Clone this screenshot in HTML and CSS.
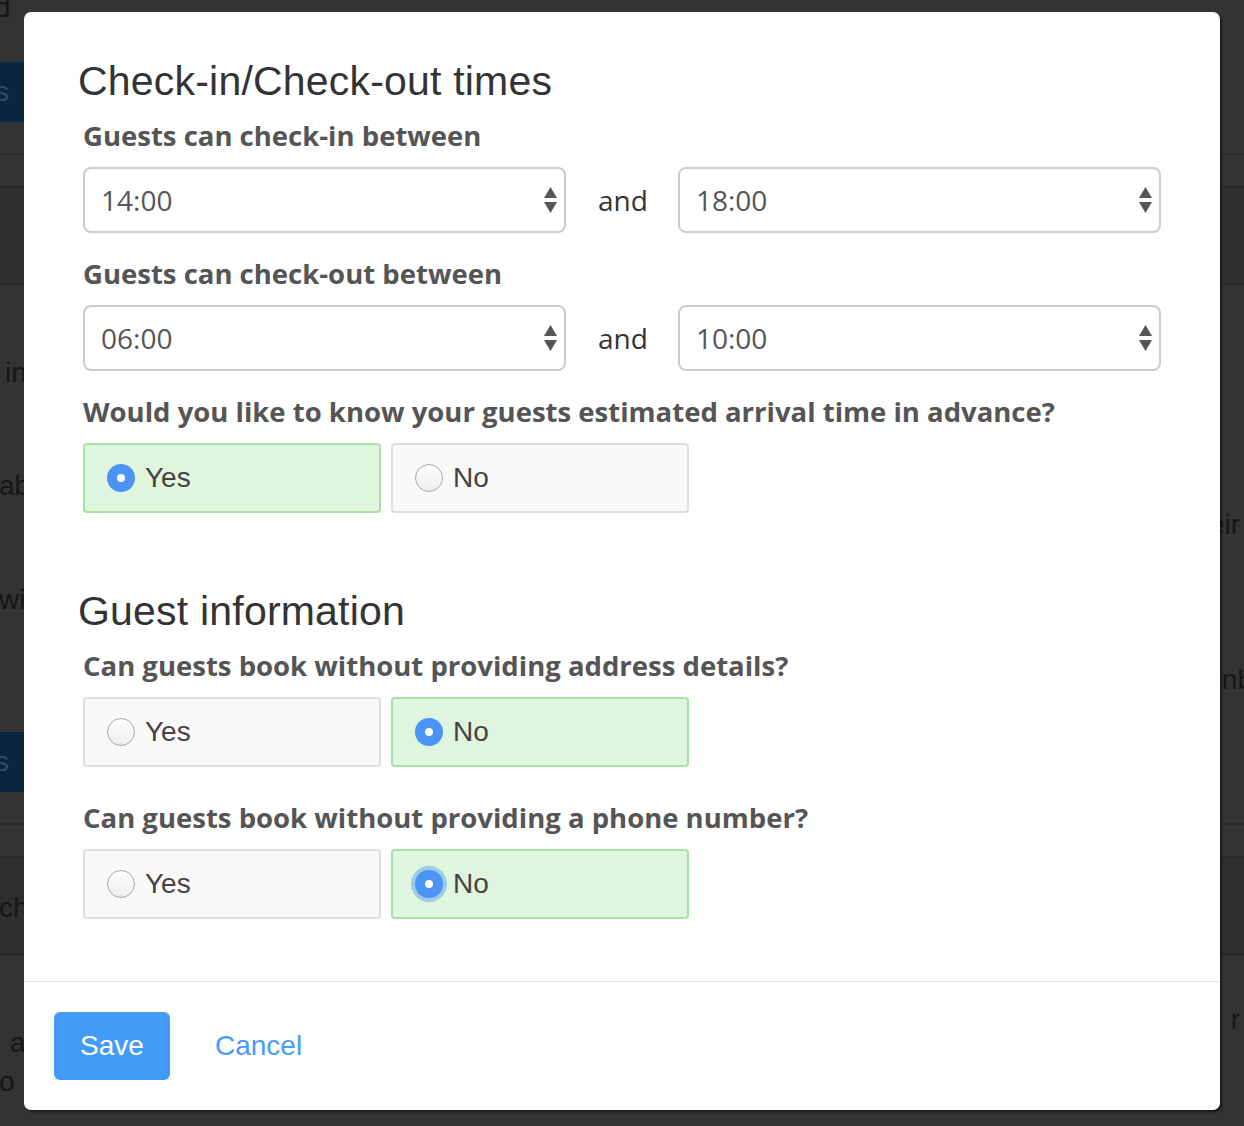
FILE: index.html
```html
<html>
<head>
  <link rel="stylesheet" href="styles.css">
</head>
<body>
  <!-- page behind the dialog -->
  <div class="backdrop">
    <div class="bg-head"><span class="bg-word cut">d</span></div>
    <div class="bg-tab"><span>s</span></div>
    <div class="bg-row"></div>
    <div class="bg-row"></div>
    <div class="bg-row tall"></div>
    <div class="bg-text top-block">
      <div class="bg-line l1"><span class="in">in the</span></div>
      <div class="bg-line l2"><span class="edge">able</span></div>
      <div class="bg-line l3 right"><span>their</span></div>
      <div class="bg-line l4"><span class="edge">will</span></div>
      <div class="bg-line l5 right"><span class="over">nb</span></div>
    </div>
    <div class="bg-tab"><span>s</span></div>
    <div class="bg-row"></div>
    <div class="bg-row"></div>
    <div class="bg-row tall"><div class="bg-line l6"><span class="edge">check</span></div></div>
    <div class="bg-text">
      <div class="bg-line l7 right"><span>r</span></div>
      <div class="bg-line l8"><span class="in2">a</span></div>
      <div class="bg-line l9"><span class="edge">o</span></div>
    </div>
  </div>

  <div class="modal">
    <div class="modal-body">
      <section class="section">
        <h2>Check-in/Check-out times</h2>
        <div class="group">
          <label>Guests can check-in between</label>
          <div class="range">
            <div class="select">
              <span>14:00</span>
              <svg class="arrows" width="13" height="26" viewBox="0 0 13 26"><path d="M0 11 L6.5 0 L13 11 Z M0 15 L13 15 L6.5 26 Z" fill="#555"/></svg>
            </div>
            <span class="and">and</span>
            <div class="select">
              <span>18:00</span>
              <svg class="arrows" width="13" height="26" viewBox="0 0 13 26"><path d="M0 11 L6.5 0 L13 11 Z M0 15 L13 15 L6.5 26 Z" fill="#555"/></svg>
            </div>
          </div>
        </div>
        <div class="group">
          <label>Guests can check-out between</label>
          <div class="range">
            <div class="select">
              <span>06:00</span>
              <svg class="arrows" width="13" height="26" viewBox="0 0 13 26"><path d="M0 11 L6.5 0 L13 11 Z M0 15 L13 15 L6.5 26 Z" fill="#555"/></svg>
            </div>
            <span class="and">and</span>
            <div class="select">
              <span>10:00</span>
              <svg class="arrows" width="13" height="26" viewBox="0 0 13 26"><path d="M0 11 L6.5 0 L13 11 Z M0 15 L13 15 L6.5 26 Z" fill="#555"/></svg>
            </div>
          </div>
        </div>
        <div class="group choice-group">
          <label>Would you like to know your guests estimated arrival time in advance?</label>
          <div class="choices">
            <div class="choice on"><span class="radio on"></span>Yes</div>
            <div class="choice"><span class="radio"></span>No</div>
          </div>
        </div>
      </section>

      <section class="section">
        <h2>Guest information</h2>
        <div class="group choice-group">
          <label>Can guests book without providing address details?</label>
          <div class="choices">
            <div class="choice"><span class="radio"></span>Yes</div>
            <div class="choice on"><span class="radio on"></span>No</div>
          </div>
        </div>
        <div class="group choice-group">
          <label>Can guests book without providing a phone number?</label>
          <div class="choices">
            <div class="choice"><span class="radio"></span>Yes</div>
            <div class="choice on"><span class="radio on focus"></span>No</div>
          </div>
        </div>
      </section>
    </div>
    <div class="modal-footer">
      <button class="btn-save">Save</button>
      <a class="cancel" href="#">Cancel</a>
    </div>
  </div>
</body>
</html>
```

FILE: styles.css
```css
body {
  margin: 0;
  background: #333;
  font-family: "Open Sans", sans-serif;
  height: 1126px;
  overflow: hidden;
  position: relative;
}

/* page behind the overlay */
.backdrop {
  height: 1126px;
  overflow: hidden;
  font-family: "Liberation Sans", Arial, sans-serif;
  font-size: 28px;
  color: #161616;
}

.bg-head {
  height: 62px;
  line-height: 20px;
}

.bg-word.cut {
  display: inline-block;
  margin-top: -2px;
  margin-left: -5px;
}

.bg-tab {
  height: 60px;
  width: 320px;
  background: #0b2440;
  color: #334b66;
  line-height: 60px;
  text-indent: -5px;
}

.bg-row {
  display: flow-root;
  height: 33px;
  box-sizing: border-box;
  border-bottom: 2px solid #2a2a2a;
}

.bg-row.tall {
  height: 97px;
  background: #2f2f2f;
}

.bg-text {
  display: flow-root;
}

.bg-text.top-block {
  height: 447px;
}

.bg-line {
  height: 38px;
  line-height: 38px;
  white-space: nowrap;
}

.bg-line.right {
  text-align: right;
  padding-right: 4px;
}

.bg-line .in { margin-left: 5px; }
.bg-line .in2 { margin-left: 10px; }
.bg-line .edge { margin-left: -1px; }
.bg-line .over { margin-right: -13px; }

.l1 { margin-top: 69px; }
.l2 { margin-top: 75px; }
.l3 { margin-top: 1px; }
.l4 { margin-top: 37px; }
.l5 { margin-top: 42px; }
.l6 { margin-top: 31px; }
.l7 { margin-top: 46px; }
.l8 { margin-top: -15px; }
.l9 { margin-top: 1px; }

/* dialog */
.modal {
  position: absolute;
  top: 12px;
  left: 24px;
  width: 1196px;
  background: #fff;
  border-radius: 7px;
  box-shadow: 2px 2px 2px rgba(0,0,0,0.5);
}

.modal-body {
  padding: 47px 54px 29px;
}

.section {
  display: flow-root;
}

.section + .section {
  margin-top: 43px;
}

.section h2 {
  margin: 0 0 15px;
  font-family: "Liberation Sans", Arial, sans-serif;
  font-weight: normal;
  font-size: 41px;
  line-height: 44px;
  letter-spacing: 0.2px;
  color: #333;
}

.group {
  margin: 0 5px 23px;
}

.group.choice-group {
  margin-bottom: 33px;
}

.group label {
  display: block;
  font-weight: 700;
  font-size: 27.5px;
  line-height: 36px;
  color: #555;
  margin-bottom: 13px;
}

.range {
  display: flex;
  align-items: center;
}

.select {
  flex: 1;
  height: 66px;
  box-sizing: border-box;
  border: 2px solid #ccc;
  border-radius: 8px;
  display: flex;
  align-items: center;
  justify-content: space-between;
  padding: 0 7px 0 16px;
  font-size: 28px;
  color: #555;
}

.and {
  padding: 0 30px 0 32px;
  font-size: 28px;
  color: #333;
}

.choices {
  display: flex;
  gap: 10px;
}

.choice {
  width: 298px;
  height: 70px;
  box-sizing: border-box;
  border: 2px solid #ddd;
  border-radius: 4px;
  background: #f9f9f9;
  display: flex;
  align-items: center;
  padding-left: 22px;
  font-family: "Liberation Sans", Arial, sans-serif;
  font-size: 28px;
  color: #444;
}

.choice.on {
  background: #dff5dd;
  border-color: #a6e2a2;
}

.radio {
  width: 28px;
  height: 28px;
  box-sizing: border-box;
  border-radius: 50%;
  border: 1px solid #a9a9a9;
  background: linear-gradient(#fff, #ececec);
  margin-right: 10px;
  position: relative;
}

.radio.on {
  border: none;
  background: #4b94f5;
}

.radio.on::after {
  content: "";
  position: absolute;
  left: 10px;
  top: 10px;
  width: 8px;
  height: 8px;
  border-radius: 50%;
  background: #fff;
}

.radio.focus {
  box-shadow: 0 0 0 4px rgba(75,148,245,0.45);
}

.modal-footer {
  border-top: 1px solid #e5e5e5;
  padding: 30px;
  display: flex;
  align-items: center;
}

.btn-save {
  width: 116px;
  height: 68px;
  border: none;
  border-radius: 6px;
  background: #429bf7;
  color: #fff;
  font-family: "Liberation Sans", Arial, sans-serif;
  font-size: 28px;
  padding: 0;
}

.cancel {
  margin-left: 45px;
  font-family: "Liberation Sans", Arial, sans-serif;
  font-size: 28px;
  color: #4a9bf5;
  text-decoration: none;
}
```
